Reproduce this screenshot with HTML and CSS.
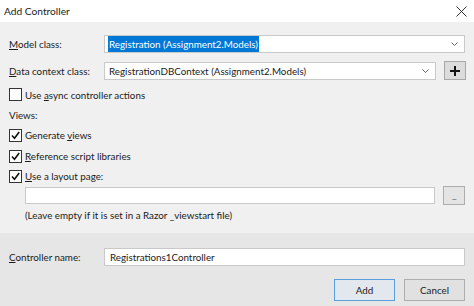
FILE: index.html
```html
<!DOCTYPE html>
<html>
<head>
<meta charset="utf-8">
<link rel="stylesheet" href="styles.css">
</head>
<body>
<div class="dialog">
  <div class="titlebar">
    <span class="title">Add Controller</span>
    <svg class="close" width="11" height="11" viewBox="0 0 11 11"><path d="M0.5 0.5 L10.5 10.5 M10.5 0.5 L0.5 10.5" stroke="#333" stroke-width="1" fill="none"/></svg>
  </div>
  <div class="main">
    <div class="row">
      <span class="label"><u>M</u>odel class:</span>
      <div class="combo combo-full">
        <span class="sel">Registration (Assignment2.Models)</span>
        <svg class="chev" width="7" height="4" viewBox="0 0 7 4"><path d="M0.5 0.5 L3.5 3.5 L6.5 0.5" stroke="#666" stroke-width="1" fill="none"/></svg>
      </div>
    </div>
    <div class="row row2">
      <span class="label"><u>D</u>ata context class:</span>
      <div class="combo combo-short">
        <span class="val">RegistrationDBContext (Assignment2.Models)</span>
        <svg class="chev" width="7" height="4" viewBox="0 0 7 4"><path d="M0.5 0.5 L3.5 3.5 L6.5 0.5" stroke="#666" stroke-width="1" fill="none"/></svg>
      </div>
      <div class="btn-sq">
        <svg width="10" height="10" viewBox="0 0 10 10"><path d="M5 0 V10 M0 5 H10" stroke="#111" stroke-width="2" fill="none"/></svg>
      </div>
    </div>
    <div class="check check-async">
      <span class="box"></span>
      <span class="ctext">Use <u>a</u>sync controller actions</span>
    </div>
    <div class="views">Views:</div>
    <div class="check check-g">
      <span class="box"><svg width="11" height="11" viewBox="0 0 11 11"><path d="M2 5.5 L4.5 8.2 L9.2 2" stroke="#111" stroke-width="1.6" fill="none"/></svg></span>
      <span class="ctext">Generate <u>v</u>iews</span>
    </div>
    <div class="check check-g">
      <span class="box"><svg width="11" height="11" viewBox="0 0 11 11"><path d="M2 5.5 L4.5 8.2 L9.2 2" stroke="#111" stroke-width="1.6" fill="none"/></svg></span>
      <span class="ctext"><u>R</u>eference script libraries</span>
    </div>
    <div class="check check-l">
      <span class="box"><svg width="11" height="11" viewBox="0 0 11 11"><path d="M2 5.5 L4.5 8.2 L9.2 2" stroke="#111" stroke-width="1.6" fill="none"/></svg></span>
      <span class="ctext"><u>U</u>se a layout page:</span>
    </div>
    <div class="layout-row">
      <div class="input layout-input"></div>
      <div class="btn-sq btn-dots"><span class="dots">...</span></div>
    </div>
    <div class="hint">(Leave empty if it is set in a Razor _viewstart file)</div>
  </div>
  <div class="footer">
    <div class="row">
      <span class="label"><u>C</u>ontroller name:</span>
      <div class="input name-input">Registrations1Controller</div>
    </div>
    <div class="buttons">
      <div class="btn btn-default">Add</div>
      <div class="btn">Cancel</div>
    </div>
  </div>
</div>
</body>
</html>
```
FILE: styles.css
```css
* { box-sizing: border-box; }
html, body { margin: 0; padding: 0; }
body {
  width: 474px;
  height: 306px;
  overflow: hidden;
  font-family: "Lato", "Noto Sans", sans-serif;
  font-size: 9.8px;
  color: #1b1b1b;
  background: #f0f0f0;
}
u { text-decoration: underline; text-underline-offset: 1px; }
.dialog { width: 474px; height: 306px; display: flex; flex-direction: column; }
.titlebar {
  height: 22px;
  background: #ffffff;
  display: flex;
  align-items: center;
  justify-content: space-between;
  padding: 0 7px 0 4px;
  flex: none;
}
.title { font-size: 10.2px; color: #222; }
.main {
  height: 211px;
  flex: none;
  padding: 13px 9px 0 9px;
  display: flex;
  flex-direction: column;
}
.row { display: flex; align-items: center; height: 18px; }
.row2 { margin-top: 8px; height: 19px; }
.label { width: 95px; flex: none; }
.combo {
  height: 18px;
  background: #fff;
  border: 1px solid #c9c9c9;
  display: flex;
  align-items: center;
  justify-content: space-between;
  padding: 0 6px 0 3px;
}
.combo-full { flex: 1; }
.combo-short { width: 332px; flex: none; }
.sel {
  background: #0078d7;
  color: #fff;
  padding: 0 1px;
  line-height: 16px;
}
.val { padding-left: 1px; }
.chev { flex: none; }
.btn-sq {
  width: 22px;
  height: 19px;
  margin-left: 8px;
  background: #dcdcdc;
  border: 1px solid #a8a8a8;
  display: flex;
  align-items: center;
  justify-content: center;
  flex: none;
}
.check { display: flex; align-items: center; }
.check-async { margin-top: 8px; height: 13px; }
.check-g { height: 20px; }
.check-g + .check-g, .check-g + .check-l { margin-top: 1px; }
.check-l { height: 18px; }
.box {
  width: 13px;
  height: 13px;
  border: 1px solid #333;
  background: #fff;
  flex: none;
  display: flex;
  align-items: center;
  justify-content: center;
}
.ctext { margin-left: 3px; }
.views { margin-top: 6px; line-height: 16px; height: 16px; margin-bottom: 2px; }
.layout-row { display: flex; align-items: center; height: 19px; margin-top: 1px; padding-left: 16px; }
.input {
  background: #fff;
  border: 1px solid #c9c9c9;
  height: 18px;
  display: flex;
  align-items: center;
  padding-left: 5px;
}
.layout-input { width: 410px; height: 17px; flex: none; }
.btn-dots { background: #e4e4e4; border-color: #adadad; }
.dots { font-size: 8px; color: #555; line-height: 8px; margin-top: 3px; letter-spacing: -0.5px; }
.hint { margin-top: 2px; padding-left: 16px; line-height: 16px; }
.footer {
  flex: 1;
  background: #e6e6e6;
  padding: 15px 9px 0 9px;
  display: flex;
  flex-direction: column;
}
.name-input { flex: 1; }
.buttons { display: flex; justify-content: flex-end; margin-top: 13px; gap: 9px; }
.btn {
  width: 61px;
  height: 22px;
  background: #e1e1e1;
  border: 1px solid #adadad;
  display: flex;
  align-items: center;
  justify-content: center;
}
.btn-default { border-color: #5a9fdc; background: #e3e8ee; }
```
